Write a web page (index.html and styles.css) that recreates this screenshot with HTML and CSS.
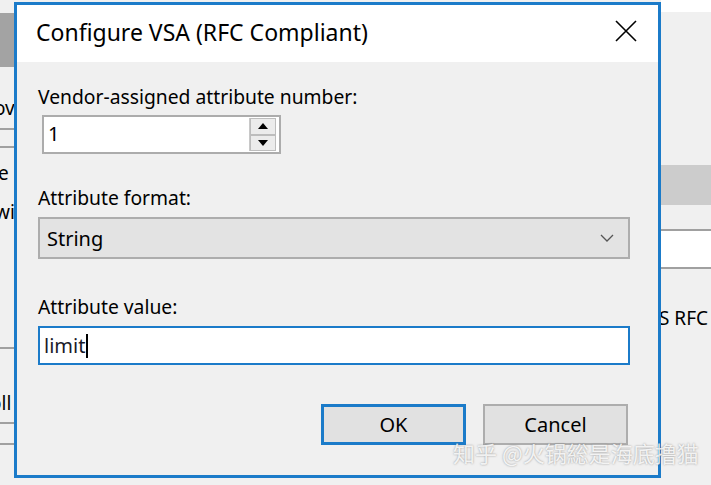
FILE: index.html
```html
<!DOCTYPE html>
<html lang="en">
<head>
    <meta charset="UTF-8">
    <title>Configure VSA (RFC Compliant)</title>
    <link rel="stylesheet" href="styles.css">
</head>
<body>
    <div class="desktop">
        <div class="app-left">
            <div class="left-head"></div>
            <div class="left-text ov">ov</div>
            <div class="left-rule r1"></div>
            <div class="left-rule r2"></div>
            <div class="left-text e">e</div>
            <div class="left-text wi">wi</div>
            <div class="left-rule r3"></div>
            <div class="left-text oll">oll</div>
            <div class="left-rule r4"></div>
            <div class="left-rule r5"></div>
        </div>
        <div class="app-mid"></div>
        <div class="app-right">
            <div class="right-band"></div>
            <div class="right-box"></div>
            <div class="right-text">S RFC</div>
        </div>
    </div>

    <div class="dialog">
        <div class="titlebar">
            <span class="title">Configure VSA (RFC Compliant)</span>
            <svg class="close" width="22" height="22" viewBox="0 0 22 22">
                <path d="M1 1 L21 21 M21 1 L1 21" stroke="#000" stroke-width="1.6" fill="none"/>
            </svg>
        </div>
        <div class="body">
            <label class="field-label">Vendor-assigned attribute number:</label>
            <div class="spinner">
                <span class="spin-value">1</span>
                <div class="spin-buttons">
                    <div class="spin-btn">
                        <svg width="10" height="6" viewBox="0 0 10 6"><path d="M5 0 L10 6 L0 6 Z" fill="#000"/></svg>
                    </div>
                    <div class="spin-btn">
                        <svg width="10" height="6" viewBox="0 0 10 6"><path d="M0 0 L10 0 L5 6 Z" fill="#000"/></svg>
                    </div>
                </div>
            </div>

            <label class="field-label second">Attribute format:</label>
            <div class="select">
                <span>String</span>
                <svg width="14" height="8" viewBox="0 0 14 8"><path d="M1 1 L7 7 L13 1" stroke="#555" stroke-width="1.3" fill="none"/></svg>
            </div>

            <label class="field-label third">Attribute value:</label>
            <div class="text-input"><span>limit</span><span class="caret"></span></div>

            <div class="buttons">
                <div class="btn default">OK</div>
                <div class="btn">Cancel</div>
            </div>
        </div>
    </div>

    <div class="watermark">知乎 @火锅総是海底撸猫</div>
</body>
</html>
```

FILE: styles.css
```css
body {
    margin: 0;
    width: 711px;
    height: 485px;
    overflow: hidden;
    background-color: #f0f0f0;
    font-family: "Noto Sans", "Noto Sans CJK SC", sans-serif;
    color: #000;
    position: relative;
}
.desktop {
    display: flex;
    height: 485px;
}
.app-left {
    width: 14px;
    background-color: #f0f0f0;
    overflow: hidden;
    padding-top: 13px;
}
.left-head {
    height: 54px;
    background-color: #a3a3a3;
}
.left-text {
    font-size: 19px;
    line-height: 26px;
    margin-left: -6px;
    white-space: nowrap;
}
.left-text.ov { margin-top: 28px; }
.left-text.e { margin-top: 12px; margin-left: -2px; }
.left-text.wi { margin-top: 13px; margin-left: -5px; }
.left-text.oll { margin-top: 41px; margin-left: -10px; }
.left-rule {
    height: 2px;
    background-color: #a0a0a0;
}
.r1 { margin-top: 7px; }
.r2 { margin-top: 16px; }
.r3 { margin-top: 122px; }
.r4 { margin-top: 6px; }
.r5 { margin-top: 19px; }
.app-mid {
    flex: 1;
    background-color: #f0f0f0;
}
.app-right {
    width: 50px;
    background-color: #f0f0f0;
    padding-top: 165px;
    overflow: hidden;
    border-top: 12px solid #fff;
    box-sizing: border-box;
}
.right-band {
    height: 40px;
    margin-top: -12px;
    background-color: #cccccc;
}
.right-box {
    height: 36px;
    margin-top: 24px;
    background-color: #fff;
    border-top: 2px solid #a0a0a0;
    border-bottom: 2px solid #a0a0a0;
}
.right-text {
    margin-top: 36px;
    font-size: 19px;
    white-space: nowrap;
    margin-left: -2px;
}

.dialog {
    position: absolute;
    left: 14px;
    top: 2px;
    width: 641px;
    height: 470px;
    border: 3px solid #1b7bc9;
    background-color: #f0f0f0;
    display: flex;
    flex-direction: column;
}
.titlebar {
    height: 57px;
    background-color: #fff;
    display: flex;
    align-items: center;
    justify-content: space-between;
    padding: 0 21px 0 19px;
}
.title {
    font-size: 23px;
    margin-top: -4px;
}
.close {
    margin-top: -5px;
}
.body {
    flex: 1;
    display: flex;
    flex-direction: column;
    padding: 22px 28px 0 21px;
}
.field-label {
    font-size: 19.3px;
    line-height: 26px;
    display: block;
}
.field-label.second {
    margin-top: 31px;
}
.field-label.third {
    margin-top: 35px;
}
.spinner {
    margin: 5px 0 0 4px;
    width: 235px;
    height: 35px;
    border: 2px solid #acacac;
    background-color: #fff;
    display: flex;
    justify-content: space-between;
}
.spin-value {
    font-size: 20px;
    line-height: 34px;
    padding-left: 4px;
}
.spin-buttons {
    width: 26px;
    margin: 1px 3px 1px 0;
    display: flex;
    flex-direction: column;
    border-left: 1px solid #c8c8c8;
    background-color: #ececec;
}
.spin-btn {
    flex: 1;
    display: flex;
    align-items: center;
    justify-content: center;
    border: 1px solid #bdbdbd;
}
.select {
    margin-top: 6px;
    height: 38px;
    border: 2px solid #adadad;
    background-color: #e3e3e3;
    display: flex;
    align-items: center;
    justify-content: space-between;
    padding: 0 14px 0 7px;
    font-size: 20px;
}
.text-input {
    margin-top: 6px;
    height: 35px;
    border: 2px solid #1b7bc9;
    background-color: #fff;
    display: flex;
    align-items: center;
    padding-left: 4px;
    font-size: 20px;
    color: #1a1a2a;
}
.caret {
    width: 2px;
    height: 24px;
    background-color: #000;
    margin-left: 1px;
}
.buttons {
    display: flex;
    justify-content: flex-end;
    gap: 17px;
    margin-top: 39px;
    margin-right: 2px;
}
.btn {
    width: 141px;
    height: 37px;
    border: 2px solid #adadad;
    background-color: #e1e1e1;
    font-size: 20px;
    display: flex;
    align-items: center;
    justify-content: center;
}
.btn.default {
    width: 139px;
    height: 35px;
    border: 3px solid #1b7bc9;
}
.watermark {
    position: absolute;
    left: 453px;
    top: 436px;
    font-size: 22px;
    color: rgba(255, 255, 255, 0.85);
    text-shadow: 0 0 2px rgba(80, 80, 80, 0.6);
    white-space: nowrap;
    font-family: "Noto Sans CJK SC", sans-serif;
}
```
